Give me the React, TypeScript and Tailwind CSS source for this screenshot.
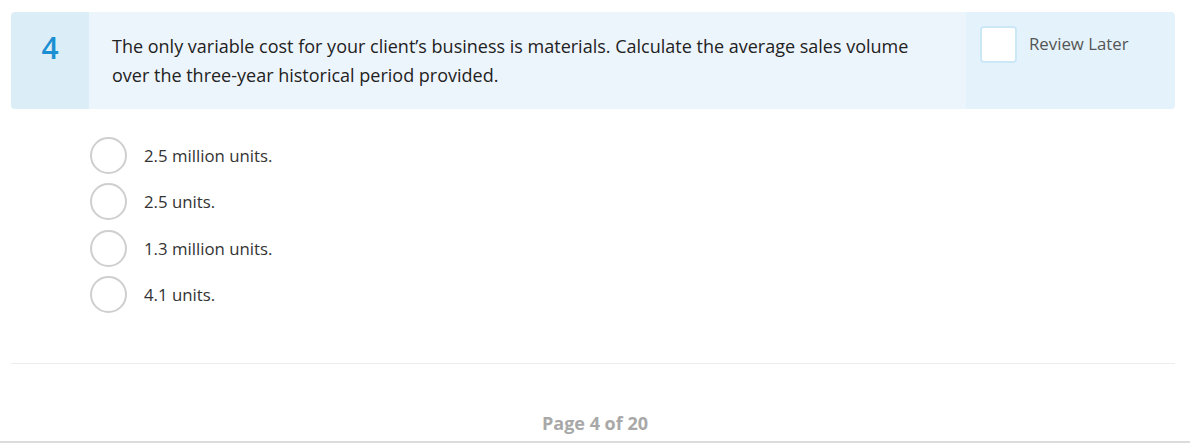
import React from "react";

const options = [
  "2.5 million units.",
  "2.5 units.",
  "1.3 million units.",
  "4.1 units.",
];

export default function App() {
  return (
    <div className="w-[1190px] h-[448px] bg-white font-['Open_Sans',sans-serif]">
      <div className="pl-[11px] pr-[15px] pt-3">
        {/* question header */}
        <div className="flex h-[97px] rounded overflow-hidden">
          <div className="w-[78px] bg-[#dbeef8] flex justify-center pt-[18px]">
            <span className="text-[30px] leading-[36px] font-semibold text-[#1b8fd1]">4</span>
          </div>
          <div className="flex-1 bg-[#edf5fc] pl-[23px] pr-[30px] pt-[20px]">
            <p className="text-[18px] leading-[29px] text-[#222]">
              The only variable cost for your client’s business is materials. Calculate the average sales volume
              over the three-year historical period provided.
            </p>
          </div>
          <div className="w-[209px] bg-[#e4f3fb] flex items-start pt-[14px] pl-[14px] gap-3">
            <div className="w-[37px] h-[37px] rounded-[4px] bg-white border-2 border-[#cce8f7]" />
            <span className="text-[16.8px] leading-[36px] text-[#555]">Review Later</span>
          </div>
        </div>

        {/* answers */}
        <div className="pl-[79px] pt-[28px] flex flex-col gap-[9.4px]">
          {options.map((o) => (
            <label key={o} className="flex items-center gap-[17px] h-[37px]">
              <span className="w-[37px] h-[37px] rounded-full border-2 border-[#cfcfcf] bg-white" />
              <span className="text-[16.8px] text-[#333]">{o}</span>
            </label>
          ))}
        </div>

        <div className="mt-[50px] border-t border-[#ececec]" />
      </div>

      <div className="h-[79px] border-b-2 border-[#dcdcdc] flex items-end justify-center pb-[4px]">
        <span className="text-[18px] font-bold text-[#a8a8a8]">Page 4 of 20</span>
      </div>
    </div>
  );
}
